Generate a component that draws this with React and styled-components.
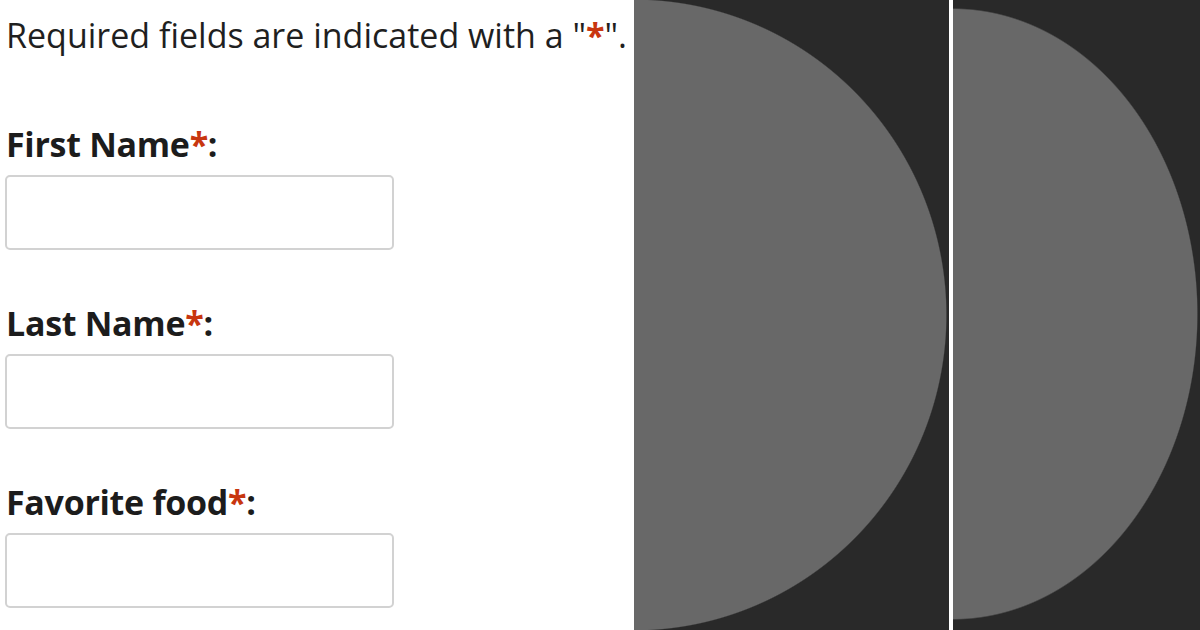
import React from "react";
import styled, { createGlobalStyle } from "styled-components";

const Global = createGlobalStyle`
  html, body { margin: 0; padding: 0; background: #fff; }
  body { width: 1200px; height: 630px; overflow: hidden; font-family: "Open Sans", "Noto Sans", sans-serif; }
`;

const Page = styled.div`
  display: flex;
  width: 1200px;
  height: 630px;
  background: #fff;
`;

const Form = styled.div`
  width: 634px;
  flex: none;
  display: flex;
  flex-direction: column;
  padding: 12px 0 0 5px;
  box-sizing: border-box;
`;

const Intro = styled.p`
  margin: 0 0 0 1px;
  font-size: 34px;
  line-height: 46px;
  color: #1f1f1f;
  white-space: nowrap;
  letter-spacing: 0;
`;

const Star = styled.span`
  color: #c8360f;
  font-weight: 700;
`;

const Field = styled.div`
  display: flex;
  flex-direction: column;
  margin-top: ${(p) => p.$top}px;
`;

const Label = styled.label`
  font-size: 34px;
  font-weight: 700;
  line-height: 46px;
  color: #1c1c1c;
  margin: 0 0 8px 1px;
  white-space: nowrap;
  letter-spacing: -0.3px;
`;

const Input = styled.input`
  width: 389px;
  height: 75px;
  box-sizing: border-box;
  border: 2px solid #d2d2d2;
  border-radius: 5px;
  background: #fff;
  outline: none;
`;

const Panel = styled.div`
  flex: none;
  width: ${(p) => p.$w}px;
  height: 630px;
  background: radial-gradient(
      ${(p) => p.$rx}px ${(p) => p.$ry}px at 0 ${(p) => p.$cy}px,
      #686868 calc(100% - 1.2px),
      #292929 100%
    );
  background-color: #292929;
`;

const Divider = styled.div`
  flex: none;
  width: 4px;
  height: 630px;
  background: #fff;
`;

const fields = [
  { label: "First Name", top: 63 },
  { label: "Last Name", top: 50 },
  { label: "Favorite food", top: 50 },
];

export default function App() {
  return (
    <>
      <Global />
      <Page>
        <Form>
          <Intro>
            Required fields are indicated with a "<Star>*</Star>".
          </Intro>
          {fields.map((f) => (
            <Field key={f.label} $top={f.top}>
              <Label>
                {f.label}
                <Star>*</Star>:
              </Label>
              <Input type="text" />
            </Field>
          ))}
        </Form>
        <Panel $w={315} $rx={313} $ry={316} $cy={315} />
        <Divider />
        <Panel $w={247} $rx={245} $ry={306} $cy={314} />
      </Page>
    </>
  );
}
